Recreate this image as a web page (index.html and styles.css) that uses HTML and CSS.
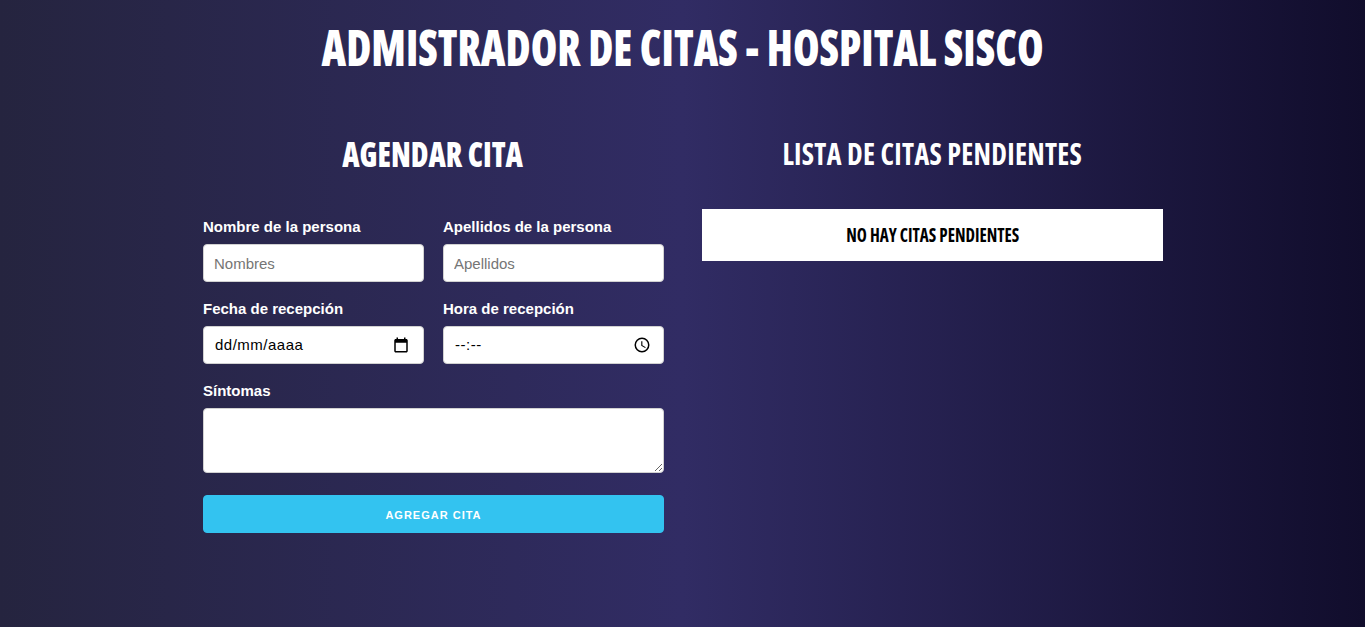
FILE: index.html

```html
<!DOCTYPE html>
<html lang="es">
<head>
  <meta charset="UTF-8" />
  <title>Administrador de citas</title>
  <link rel="stylesheet" href="styles.css">
</head>
<body>

<h1 class="main-title"><span class="squeeze">Admistrador de citas - Hospital Sisco</span></h1>

<div class="container">
  <div class="column">
    <h2 class="form-title"><span class="squeeze">Agendar cita</span></h2>
    <form class="cita-form">
      <div>
        <label>Nombre de la persona</label>
        <input class="field" type="text" placeholder="Nombres">
      </div>
      <div>
        <label>Apellidos de la persona</label>
        <input class="field" type="text" placeholder="Apellidos">
      </div>
      <div>
        <label>Fecha de recepción</label>
        <div class="field picker">
          <span>dd/mm/aaaa</span>
          <svg class="picker-icon" viewBox="0 0 24 24"><path d="M19 4h-1V2h-2v2H8V2H6v2H5c-1.1 0-2 .9-2 2v14c0 1.1.9 2 2 2h14c1.1 0 2-.9 2-2V6c0-1.1-.9-2-2-2zm0 16H5V9h14v11z"/></svg>
        </div>
      </div>
      <div>
        <label>Hora de recepción</label>
        <div class="field picker time-picker">
          <span>--:--</span>
          <svg class="picker-icon" viewBox="0 0 24 24"><path d="M12 2a10 10 0 1 0 0 20 10 10 0 0 0 0-20zm0 18a8 8 0 1 1 0-16 8 8 0 0 1 0 16z"/><path d="M12.5 7H11v6l5.2 3.1.8-1.2-4.5-2.7z"/></svg>
        </div>
      </div>
      <div class="full">
        <label>Síntomas</label>
        <textarea class="field sintomas"></textarea>
      </div>
      <button class="full add-btn" type="button">Agregar cita</button>
    </form>
  </div>

  <div class="column">
    <h3 class="list-title"><span class="squeeze">Lista de citas pendientes</span></h3>
    <div class="empty-box"><span class="squeeze">No hay citas pendientes</span></div>
  </div>
</div>

</body>
</html>
```

FILE: styles.css

```css
* { box-sizing: border-box; }
html, body {
  margin: 0;
  padding: 0;
  height: 100%;
  overflow: hidden;
}
body {
  background: linear-gradient(to right, #25243f 0%, #312c64 50%, #110d2c 100%);
  font-family: "Liberation Sans", Arial, sans-serif;
  font-size: 15px;
  line-height: 24px;
  color: #fff;
}
.main-title, .form-title, .list-title, .empty-box {
  font-family: "Open Sans", sans-serif;
  font-stretch: 75%;
  font-weight: 700;
  text-transform: uppercase;
  text-align: center;
  margin: 0;
}
.main-title {
  font-size: 49px;
  line-height: 60px;
  padding-top: 17px;
  font-weight: 800;
}
.squeeze { display: inline-block; white-space: nowrap; }
.main-title .squeeze { transform: scaleX(0.875); }
.form-title .squeeze { transform: scaleX(0.84); }
.list-title .squeeze { letter-spacing: 0.3px; transform: scaleX(0.935); }
.empty-box .squeeze { transform: scaleX(0.85); }
.container {
  width: 999px;
  margin: 0 auto;
  padding-top: 52px;
  display: flex;
}
.column {
  width: 500px;
  padding: 0 20px;
}
.column + .column { width: 499px; padding: 0 19px; }
.form-title {
  font-size: 36px;
  line-height: 50px;
  margin-bottom: 36px;
  font-weight: 800;
}
.list-title {
  font-size: 30px;
  line-height: 50px;
  margin-bottom: 30px;
}
.cita-form {
  display: grid;
  grid-template-columns: 221px 221px;
  column-gap: 19px;
  row-gap: 15px;
}
.full { grid-column: 1 / -1; }
label {
  display: block;
  font-weight: 700;
  margin-bottom: 5px;
}
.field {
  display: block;
  width: 100%;
  height: 38px;
  padding: 6px 10px;
  background: #fff;
  border: 1px solid #d1d1d1;
  border-radius: 4px;
  font-family: "Liberation Sans", Arial, sans-serif;
  font-size: 15px;
  color: #000;
}
.field::placeholder { color: #757575; }
.picker {
  display: flex;
  align-items: center;
  justify-content: space-between;
  padding-left: 11px;
  padding-right: 13px;
  letter-spacing: 0.5px;
}
.time-picker { padding-right: 12px; }
.picker-icon { width: 18px; height: 18px; }
.sintomas { height: 65px; }
.add-btn {
  margin-top: 7px;
  height: 38px;
  padding-top: 2px;
  background: #33c3f0;
  border: 1px solid #33c3f0;
  border-radius: 4px;
  color: #fff;
  font-family: "Liberation Sans", Arial, sans-serif;
  font-size: 11px;
  font-weight: 700;
  letter-spacing: 1px;
  text-transform: uppercase;
}
.empty-box {
  background: #fff;
  color: #000;
  height: 52px;
  font-size: 20px;
  line-height: 52px;
}
```
